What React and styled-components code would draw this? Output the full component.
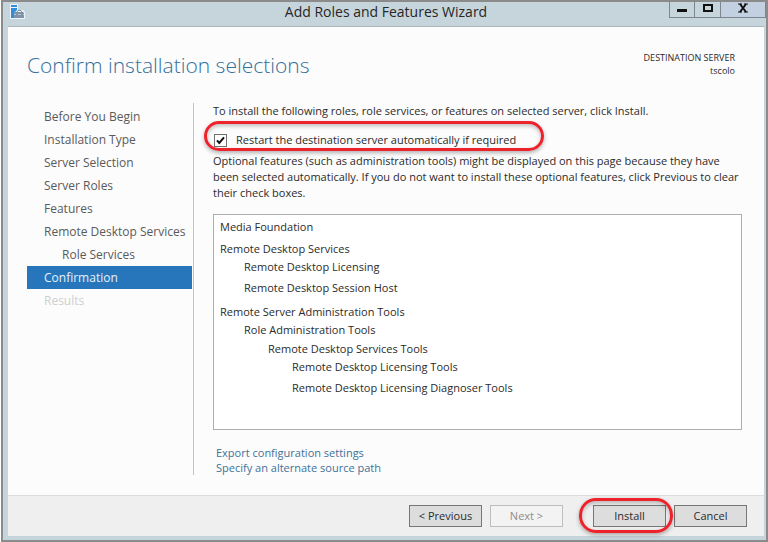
import React, { useState } from "react";
import styled, { createGlobalStyle, css } from "styled-components";

const GlobalStyle = createGlobalStyle`
  *, *::before, *::after { box-sizing: border-box; }
  body {
    margin: 0;
    background: #ffffff;
    color: #2b2b2b;
    font: 11px/16px "Segoe UI", "Open Sans", "Noto Sans", sans-serif;
  }
  button, input { font: inherit; color: inherit; }
`;

const Window = styled.div`
  display: flex;
  flex-direction: column;
  min-height: 100vh;
  margin-left: 1px;
  padding: 0 2px 4px 5px;
  background: #c6d5db;
  border: 2px solid #8b8b8b;
`;

const TitleBar = styled.header`
  display: grid;
  grid-template-columns: 1fr auto 1fr;
  align-items: start;
  height: 25px;
  border-bottom: 1px solid #a9b7bd;
`;

const AppIcon = styled.svg`
  display: block;
  margin: 2px 0 0 2px;
`;

const WindowTitle = styled.div`
  font-size: 14px;
  line-height: 20px;
  color: #262626;
`;

const WindowControls = styled.div`
  display: flex;
  justify-self: end;
  margin-right: -2px;
`;

const ControlButton = styled.button`
  display: flex;
  align-items: flex-start;
  justify-content: center;
  width: ${(p) => (p.$wide ? 45 : 26)}px;
  height: 16px;
  padding: 0;
  background: ${(p) => (p.$wide ? "#c3d0e2" : "#c6d5dc")};
  border: solid #7d868f;
  border-width: 0 1px 1px ${(p) => (p.$first ? 1 : 0)}px;
`;

const Page = styled.div`
  display: flex;
  flex: 1;
  flex-direction: column;
  background: #fcfcfc;
`;

const PageHeader = styled.div`
  display: flex;
  justify-content: space-between;
  align-items: flex-start;
  height: 76px;
  padding: 20px 29px 0 19px;
`;

const Heading = styled.h1`
  margin: 0;
  font-size: 21px;
  font-weight: 300;
  line-height: 36px;
  color: #356f9b;
`;

const Destination = styled.div`
  padding-top: 4px;
  font-size: 9px;
  line-height: 13px;
  text-align: right;
`;

const Columns = styled.div`
  display: flex;
  flex: 1;
  padding: 0 22px 20px 19px;
`;

const Nav = styled.nav`
  flex: none;
  width: 167px;
  padding: 2px 1px 0 0;
  border-right: 1px solid #c3c3c3;
`;

const NavLink = styled.a`
  display: block;
  padding-left: ${(p) => (p.$nested ? 35 : 17)}px;
  font-size: 12px;
  line-height: 23px;
  color: #5a5a5a;
  text-decoration: none;
  ${(p) => p.$disabled && css`color: #cfcfcf;`}
  ${(p) => p.$current && css`
    background: #2776bb;
    color: #e6f1fa;
  `}
`;

const Main = styled.main`
  display: flex;
  flex: 1;
  flex-direction: column;
  min-width: 0;
  padding-left: 19px;
`;

const Text = styled.p`
  margin: 0;
`;

const ringed = css`
  position: relative;
  &::after {
    content: "";
    position: absolute;
    border: 3px solid #ee222b;
    border-radius: 17px;
    box-shadow: 0 2px 4px rgba(0, 0, 0, 0.3), inset 0 2px 4px rgba(0, 0, 0, 0.25);
    pointer-events: none;
  }
`;

const RestartOption = styled.label`
  ${ringed}
  display: flex;
  align-items: center;
  align-self: flex-start;
  gap: 9px;
  height: 18px;
  margin: 12px 0 4px;
  padding-left: 1px;
  &::after { inset: -10px -28px -2px -9px; }
`;

const CheckBox = styled.input`
  appearance: none;
  width: 13px;
  height: 13px;
  margin: 0;
  border: 1px solid #707070;
  background: #ffffff;
  &:checked {
    background-image: url("data:image/svg+xml,%3Csvg xmlns='http://www.w3.org/2000/svg' viewBox='0 0 11 11'%3E%3Cpath d='M2 5.3 4.3 8 9 2.3' fill='none' stroke='%23111' stroke-width='2'/%3E%3C/svg%3E");
  }
`;

const Selections = styled.ul`
  flex: 1;
  margin: 13px 0 15px;
  padding: 3px 6px;
  list-style: none;
  background: #ffffff;
  border: 1px solid #adadad;
`;

const Selection = styled.li`
  margin-top: ${(p) => p.$space}px;
  padding-left: ${(p) => p.$level * 24}px;
  line-height: 18px;
`;

const Links = styled.div`
  display: flex;
  flex-direction: column;
  align-items: flex-start;
  padding-left: 3px;
`;

const Link = styled.a`
  line-height: 15px;
  color: #3c7299;
  text-decoration: none;
`;

const Footer = styled.footer`
  display: flex;
  justify-content: flex-end;
  gap: 8px;
  padding: 9px 17px 9px;
  background: #efefef;
  border-top: 1px solid #dcdcdc;
`;

const Ring = styled.span`
  ${ringed}
  display: flex;
  margin-left: 22px;
  &::after { inset: -7px -7px -6px -14px; }
`;

const Button = styled.button`
  width: 73px;
  height: 22px;
  padding: 0;
  line-height: 18px;
  background: #dddddd;
  border: 1px solid #777777;
  &:disabled {
    background: #f3f3f3;
    border-color: #bdbdbd;
    color: #8c8c8c;
  }
`;

const steps = [
  { label: "Before You Begin" },
  { label: "Installation Type" },
  { label: "Server Selection" },
  { label: "Server Roles" },
  { label: "Features" },
  { label: "Remote Desktop Services" },
  { label: "Role Services", nested: true },
  { label: "Confirmation", current: true },
  { label: "Results", disabled: true },
];

const selections = [
  { label: "Media Foundation", level: 0, space: 0 },
  { label: "Remote Desktop Services", level: 0, space: 4 },
  { label: "Remote Desktop Licensing", level: 1, space: 0 },
  { label: "Remote Desktop Session Host", level: 1, space: 3 },
  { label: "Remote Server Administration Tools", level: 0, space: 6 },
  { label: "Role Administration Tools", level: 1, space: 0 },
  { label: "Remote Desktop Services Tools", level: 2, space: 1 },
  { label: "Remote Desktop Licensing Tools", level: 3, space: 0 },
  { label: "Remote Desktop Licensing Diagnoser Tools", level: 3, space: 3 },
];

export default function App() {
  const [restart, setRestart] = useState(true);
  return (
    <>
      <GlobalStyle />
      <Window>
        <TitleBar>
          <AppIcon width="16" height="16" viewBox="0 0 16 16" aria-hidden="true">
            <path d="M0 0h8v6h5l2 2v7H0z" fill="#eef4f8" />
            <path d="M1 1h6v2H1zM1 4h6v2L4 9v5H1z" fill="#2f8fdc" />
            <path d="M4 9l1-1h8l1 1v5H4z" fill="#7f93a8" />
            <path d="M7 8l1-1.500h3L12 8" fill="none" stroke="#7f93a8" />
            <path d="M4 10.500h2m2 0h3m2 0h1" stroke="#b9c8d5" />
          </AppIcon>
          <WindowTitle>Add Roles and Features Wizard</WindowTitle>
          <WindowControls>
            <ControlButton $first aria-label="Minimize">
              <svg width="12" height="12" viewBox="0 0 12 12">
                <path d="M1 7h10v3H1z" fill="#111" />
              </svg>
            </ControlButton>
            <ControlButton aria-label="Maximize">
              <svg width="12" height="12" viewBox="0 0 12 12">
                <path d="M2 3h8v6H2z" fill="none" stroke="#111" strokeWidth="2" />
              </svg>
            </ControlButton>
            <ControlButton $wide aria-label="Close">
              <svg width="12" height="12" viewBox="0 0 12 12">
                <path d="M3 2l6 8M9 2L3 10" stroke="#111" strokeWidth="2" />
                <path d="M1 2h4M7 2h4M1 10h4M7 10h4" stroke="#111" />
              </svg>
            </ControlButton>
          </WindowControls>
        </TitleBar>
        <Page>
          <PageHeader>
            <Heading>Confirm installation selections</Heading>
            <Destination>
              <div>DESTINATION SERVER</div>
              <div>tscolo</div>
            </Destination>
          </PageHeader>
          <Columns>
            <Nav>
              {steps.map((s) => (
                <NavLink
                  key={s.label}
                  href="#"
                  $nested={s.nested}
                  $current={s.current}
                  $disabled={s.disabled}
                  aria-current={s.current ? "step" : undefined}
                  aria-disabled={s.disabled}
                >
                  {s.label}
                </NavLink>
              ))}
            </Nav>
            <Main>
              <Text>
                To install the following roles, role services, or features on selected server, click Install.
              </Text>
              <RestartOption>
                <CheckBox
                  type="checkbox"
                  checked={restart}
                  onChange={(e) => setRestart(e.target.checked)}
                />
                Restart the destination server automatically if required
              </RestartOption>
              <Text>
                Optional features (such as administration tools) might be displayed on this page because they have
                been selected automatically. If you do not want to install these optional features, click Previous
                to clear their check boxes.
              </Text>
              <Selections>
                {selections.map((s) => (
                  <Selection key={s.label} $level={s.level} $space={s.space}>
                    {s.label}
                  </Selection>
                ))}
              </Selections>
              <Links>
                <Link href="#">Export configuration settings</Link>
                <Link href="#">Specify an alternate source path</Link>
              </Links>
            </Main>
          </Columns>
          <Footer>
            <Button>&lt; Previous</Button>
            <Button disabled>Next &gt;</Button>
            <Ring>
              <Button>Install</Button>
            </Ring>
            <Button>Cancel</Button>
          </Footer>
        </Page>
      </Window>
    </>
  );
}
